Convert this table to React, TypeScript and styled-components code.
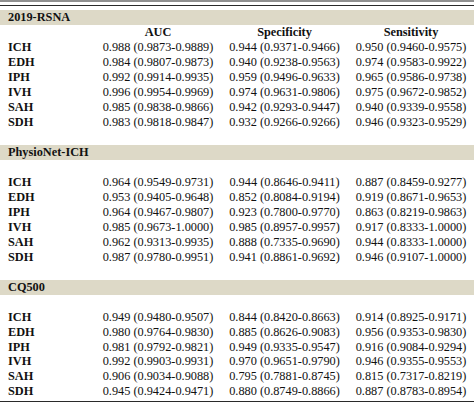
import React from "react";
import styled, { createGlobalStyle } from "styled-components";

const Global = createGlobalStyle`
  html, body { margin: 0; padding: 0; background: #ffffff; }
  body { font-family: "Liberation Serif", "Times New Roman", serif; }
`;

const Sheet = styled.div`
  width: 474px;
  border-top: 2px solid #8f8f8f;
  border-bottom: 8px solid #8f8f8f;
  padding-top: 3px;
  background: #ffffff;
`;

const Rules = styled.div`
  border-top: 1.2px solid #2a2a2a;
  border-bottom: 1.5px solid #2a2a2a;
  padding: 4.2px 0 2px;
`;

const Table = styled.table`
  width: 474px;
  border-collapse: collapse;
  table-layout: fixed;
  font-family: "Liberation Serif", "Times New Roman", serif;
  font-size: 12.3px;
  color: #111111;
`;

const Row = styled.tr`
  height: 14.97px;
`;

const BandCell = styled.td`
  background: #ddd9c7;
  font-weight: bold;
  padding: 0 0 0 8px;
  line-height: 14.97px;
  height: 14.97px;
  white-space: nowrap;
`;

const Cell = styled.td<{ $bold?: boolean; $label?: boolean }>`
  padding: 0 0 0 ${(p) => (p.$label ? "8px" : "0")};
  line-height: 14.97px;
  height: 14.97px;
  text-align: ${(p) => (p.$label ? "left" : "center")};
  font-weight: ${(p) => (p.$bold ? "bold" : "normal")};
  white-space: nowrap;
`;

type Section = {
  name: string;
  showHead: boolean;
  rows: [string, string, string, string][];
};

const sections: Section[] = [
  {
    name: "2019-RSNA",
    showHead: true,
    rows: [
      ["ICH", "0.988 (0.9873-0.9889)", "0.944 (0.9371-0.9466)", "0.950 (0.9460-0.9575)"],
      ["EDH", "0.984 (0.9807-0.9873)", "0.940 (0.9238-0.9563)", "0.974 (0.9583-0.9922)"],
      ["IPH", "0.992 (0.9914-0.9935)", "0.959 (0.9496-0.9633)", "0.965 (0.9586-0.9738)"],
      ["IVH", "0.996 (0.9954-0.9969)", "0.974 (0.9631-0.9806)", "0.975 (0.9672-0.9852)"],
      ["SAH", "0.985 (0.9838-0.9866)", "0.942 (0.9293-0.9447)", "0.940 (0.9339-0.9558)"],
      ["SDH", "0.983 (0.9818-0.9847)", "0.932 (0.9266-0.9266)", "0.946 (0.9323-0.9529)"],
    ],
  },
  {
    name: "PhysioNet-ICH",
    showHead: false,
    rows: [
      ["ICH", "0.964 (0.9549-0.9731)", "0.944 (0.8646-0.9411)", "0.887 (0.8459-0.9277)"],
      ["EDH", "0.953 (0.9405-0.9648)", "0.852 (0.8084-0.9194)", "0.919 (0.8671-0.9653)"],
      ["IPH", "0.964 (0.9467-0.9807)", "0.923 (0.7800-0.9770)", "0.863 (0.8219-0.9863)"],
      ["IVH", "0.985 (0.9673-1.0000)", "0.985 (0.8957-0.9957)", "0.917 (0.8333-1.0000)"],
      ["SAH", "0.962 (0.9313-0.9935)", "0.888 (0.7335-0.9690)", "0.944 (0.8333-1.0000)"],
      ["SDH", "0.987 (0.9780-0.9951)", "0.941 (0.8861-0.9692)", "0.946 (0.9107-1.0000)"],
    ],
  },
  {
    name: "CQ500",
    showHead: false,
    rows: [
      ["ICH", "0.949 (0.9480-0.9507)", "0.844 (0.8420-0.8663)", "0.914 (0.8925-0.9171)"],
      ["EDH", "0.980 (0.9764-0.9830)", "0.885 (0.8626-0.9083)", "0.956 (0.9353-0.9830)"],
      ["IPH", "0.981 (0.9792-0.9821)", "0.949 (0.9335-0.9547)", "0.916 (0.9084-0.9294)"],
      ["IVH", "0.992 (0.9903-0.9931)", "0.970 (0.9651-0.9790)", "0.946 (0.9355-0.9553)"],
      ["SAH", "0.906 (0.9034-0.9088)", "0.795 (0.7881-0.8745)", "0.815 (0.7317-0.8219)"],
      ["SDH", "0.945 (0.9424-0.9471)", "0.880 (0.8749-0.8866)", "0.887 (0.8783-0.8954)"],
    ],
  },
];

export default function App() {
  return (
    <>
      <Global />
      <Sheet>
        <Rules>
          <Table>
            <colgroup>
              <col style={{ width: 95 }} />
              <col style={{ width: 126 }} />
              <col style={{ width: 127 }} />
              <col style={{ width: 126 }} />
            </colgroup>
            <tbody>
              {sections.map((s, si) => (
                <React.Fragment key={s.name}>
                  <Row>
                    <BandCell colSpan={4}>{s.name}</BandCell>
                  </Row>
                  <Row>
                    <Cell $label />
                    <Cell $bold>{s.showHead ? "AUC" : ""}</Cell>
                    <Cell $bold>{s.showHead ? "Specificity" : ""}</Cell>
                    <Cell $bold>{s.showHead ? "Sensitivity" : ""}</Cell>
                  </Row>
                  {s.rows.map((r) => (
                    <Row key={r[0]}>
                      <Cell $label $bold>{r[0]}</Cell>
                      <Cell>{r[1]}</Cell>
                      <Cell>{r[2]}</Cell>
                      <Cell>{r[3]}</Cell>
                    </Row>
                  ))}
                  {si < sections.length - 1 && (
                    <Row>
                      <Cell colSpan={4} />
                    </Row>
                  )}
                </React.Fragment>
              ))}
            </tbody>
          </Table>
        </Rules>
      </Sheet>
    </>
  );
}
